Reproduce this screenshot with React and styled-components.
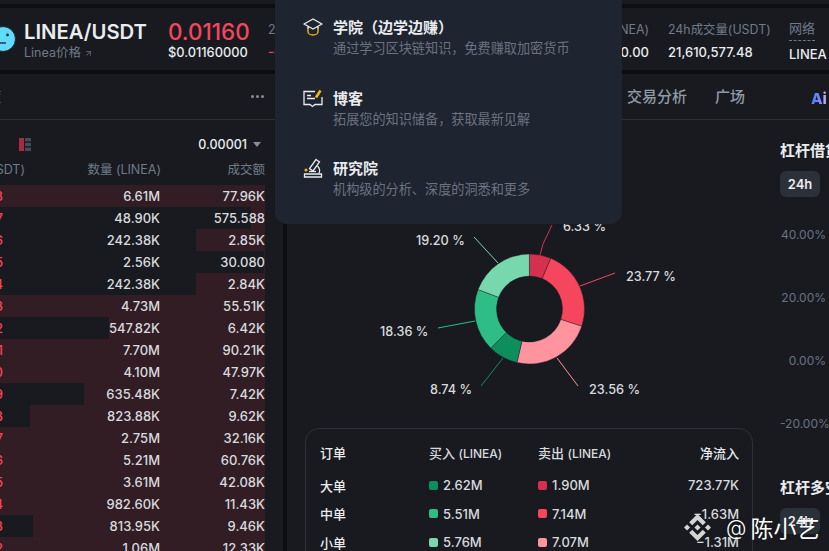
import React from 'react';
import styled, { createGlobalStyle } from 'styled-components';
import { ArrowUpRight } from 'lucide-react';

const FONT = `Inter, 'Noto Sans CJK SC', 'Noto Sans', sans-serif`;

const GlobalStyle = createGlobalStyle`
  html, body {
    margin: 0;
    padding: 0;
    background: #0c0e11;
    font-family: ${FONT};
  }
`;

const Page = styled.div`
  position: relative;
  width: 829px;
  height: 551px;
  overflow: hidden;
  background: #0c0e11;
  display: flex;
  flex-direction: column;
  gap: 4px;
  color: #eaecef;
`;

const TopStrip = styled.div`
  height: 4px;
  background: #181a20;
`;

const Header = styled.header`
  height: 62px;
  flex: none;
  background: #181a20;
  display: flex;
  align-items: center;
  gap: 19px;
  overflow: hidden;
`;

const Logo = styled.svg`
  width: 16px;
  height: 28px;
  flex: none;
  margin-right: -11px;
`;

const Pair = styled.div`
  width: 125px;
  flex: none;
  margin-top: 2px;
`;

const PairName = styled.div`
  font-size: 20.3px;
  line-height: 26px;
  font-weight: 600;
  white-space: nowrap;
  color: #eaecef;
`;

const PairLink = styled.div`
  display: flex;
  align-items: center;
  gap: 3px;
  font-size: 12.5px;
  line-height: 16px;
  color: #707a8a;
`;

const PriceBox = styled.div`
  width: 81px;
  flex: none;
  margin-top: 1px;
`;

const PriceMain = styled.div`
  font-size: 22.4px;
  line-height: 26px;
  font-weight: 500;
  color: #f6465d;
`;

const PriceFiat = styled.div`
  font-size: 12.8px;
  line-height: 16px;
  font-weight: 500;
  white-space: nowrap;
`;

const Stat = styled.div`
  width: ${(p) => p.$w}px;
  flex: none;
  margin-top: 4px;
  text-align: ${(p) => (p.$right ? 'right' : 'left')};
`;

const NetStat = styled(Stat)`
  margin-top: 0;
`;

const StatLabel = styled.div`
  font-size: 12.4px;
  line-height: 16px;
  margin-bottom: 6px;
  color: #707a8a;
  white-space: nowrap;
`;

const NetLabel = styled(StatLabel)`
  display: inline-block;
  font-size: 13px;
  line-height: 17px;
  margin-bottom: 5px;
  border-bottom: 1px dashed #707a8a;
  padding-bottom: 3px;
`;

const StatValue = styled.div`
  font-size: 13px;
  line-height: 16px;
  font-weight: 500;
  white-space: nowrap;
  color: ${(p) => p.$color || '#eaecef'};
`;

const Body = styled.div`
  flex: 1;
  min-height: 0;
  display: flex;
  gap: 4px;
`;

const BookPanel = styled.section`
  width: 283px;
  flex: none;
  background: #181a20;
  overflow: hidden;
`;

const MainPanel = styled.section`
  flex: 1;
  min-width: 0;
  background: #181a20;
  overflow: hidden;
`;

const BookTabs = styled.div`
  height: 45px;
  display: flex;
  align-items: center;
  justify-content: space-between;
  padding-right: 19px;
  border-bottom: 1px solid #2b2f36;
`;

const BookTabTitle = styled.div`
  margin-left: -14px;
  font-size: 15px;
  font-weight: 500;
  color: #929aa5;
`;

const Dots = styled.div`
  display: flex;
  gap: 2px;

  i {
    width: 3px;
    height: 3px;
    border-radius: 50%;
    background: #848e9c;
  }
`;

const Selector = styled.div`
  height: 20px;
  padding: 14px 22px 6px 19px;
  display: flex;
  align-items: center;
`;

const TickValue = styled.span`
  margin-left: auto;
  font-size: 12.5px;
  font-weight: 500;
`;

const Caret = styled.span`
  margin-left: 6px;
  width: 0;
  height: 0;
  border-left: 4px solid transparent;
  border-right: 4px solid transparent;
  border-top: 5px solid #848e9c;
`;

const BookHead = styled.div`
  width: 265px;
  height: 18px;
  margin-bottom: 7px;
  display: grid;
  grid-template-columns: 25px 136px 104px;
  font-size: 12.5px;
  line-height: 20px;
  color: #707a8a;
  text-align: right;
`;

const HeadPrice = styled.span`
  display: flex;
  justify-content: flex-end;
  white-space: nowrap;
`;

const BookRow = styled.div`
  position: relative;
  width: 265px;
  height: 22px;
  display: grid;
  grid-template-columns: 3px 157px 105px;
  align-items: center;
  font-size: 13px;
  font-weight: 500;
  color: #d8dade;
  text-align: right;
`;

const RowFill = styled.div`
  position: absolute;
  top: 0;
  bottom: 0;
  right: 0;
  background: #321d25;
`;

const RowCell = styled.span`
  position: relative;
  white-space: nowrap;
`;

const RowPrice = styled(RowCell)`
  display: flex;
  justify-content: flex-end;
  color: #f6465d;
`;

const MainTabs = styled.nav`
  height: 43px;
  padding: 0 0 2px 340px;
  display: flex;
  align-items: center;
  border-bottom: 1px solid #2b2f36;
  overflow: hidden;
`;

const Tab = styled.span`
  font-size: 15px;
  font-weight: 500;
  color: #929aa5;
  white-space: nowrap;
  margin-right: ${(p) => p.$gap}px;
`;

const AiTab = styled.span`
  margin-top: 6px;
  font-size: 15px;
  font-weight: 800;
  background: linear-gradient(90deg, #3f7fff, #7a86ff 55%, #cdbdff);
  -webkit-background-clip: text;
  background-clip: text;
  color: transparent;
`;

const MainBody = styled.div`
  display: flex;
  padding-left: 18px;
`;

const CenterCol = styled.div`
  width: 448px;
  flex: none;
`;

const ChartSvg = styled.svg`
  display: block;
  width: 448px;
  height: 308px;
`;

const ChartLabel = styled.text`
  font-family: ${FONT};
  font-size: 12.7px;
  font-weight: 500;
  fill: #d8dade;
`;

const OrderCard = styled.div`
  border: 1px solid #2b3139;
  border-radius: 14px;
  padding: 14px 13px 20px 14px;
`;

const OrderGrid = styled.div`
  display: grid;
  grid-template-columns: 109px 109px 1fr auto;
  align-items: center;
  font-size: 13px;
  font-weight: 500;
  height: ${(p) => (p.$head ? 18 : 28.5)}px;
  margin-bottom: ${(p) => (p.$head ? 10 : 0)}px;
  color: #d8dade;
`;

const OrderName = styled.span`
  color: #eaecef;
`;

const UnitText = styled.span`
  font-size: 12px;
`;

const Legend = styled.span`
  display: flex;
  align-items: center;
  gap: 5px;

  &::before {
    content: '';
    width: 9px;
    height: 9px;
    border-radius: 2px;
    background: ${(p) => p.$color};
  }
`;

const SideCol = styled.aside`
  margin-left: 27px;
  width: 46px;
  flex: none;
  padding-top: 20px;
`;

const SideTitle = styled.div`
  font-size: 15px;
  line-height: 22px;
  font-weight: 600;
  white-space: nowrap;
  color: #eaecef;
`;

const RangeButton = styled.div`
  width: 40px;
  height: 26px;
  margin-top: 9px;
  border-radius: 6px;
  background: #2b3139;
  display: flex;
  align-items: center;
  justify-content: center;
  font-size: 13px;
  font-weight: 600;
`;

const Axis = styled.div`
  margin-top: 28px;
`;

const AxisTick = styled.div`
  height: 63px;
  font-size: 12px;
  line-height: 20px;
  text-align: right;
  color: #6b7380;
  white-space: nowrap;
`;

const Menu = styled.div`
  position: absolute;
  top: 0;
  left: 275px;
  width: 347px;
  height: 224px;
  box-sizing: border-box;
  padding-top: 18px;
  background: #1e2430;
  border-radius: 0 0 12px 12px;
`;

const MenuItem = styled.div`
  height: 70.5px;
  padding-left: 28px;
  display: flex;
  gap: 10px;
`;

const MenuIcon = styled.svg`
  width: 20px;
  height: 20px;
  flex: none;
  margin-top: -1px;
`;

const MenuTitle = styled.div`
  font-size: 15px;
  line-height: 20px;
  font-weight: 600;
  color: #eaecef;
`;

const MenuDesc = styled.div`
  font-size: 13.15px;
  line-height: 20px;
  color: #6b7380;
`;

const Watermark = styled.div`
  position: absolute;
  left: 684px;
  top: 510px;
  display: flex;
  align-items: center;
  color: #fff;
  text-shadow: 0 0 2px rgba(0, 0, 0, 0.5);
`;

const WatermarkLogo = styled.svg`
  width: 27px;
  height: 27px;
  margin-right: 15px;
  fill: rgba(228, 228, 228, 0.92);
`;

const WatermarkAt = styled.span`
  font-size: 21px;
  font-weight: 300;
  margin-right: 4px;
`;

const WatermarkName = styled.span`
  font-size: 23px;
  font-weight: 400;
`;

const bookRows = [
  ['0.01183', '6.61M', '77.96K', 265],
  ['0.01177', '48.90K', '575.588', 14],
  ['0.01176', '242.38K', '2.85K', 69],
  ['0.01175', '2.56K', '30.080', 1],
  ['0.01174', '242.38K', '2.84K', 69],
  ['0.01173', '4.73M', '55.51K', 265],
  ['0.01172', '547.82K', '6.42K', 156],
  ['0.01171', '7.70M', '90.21K', 265],
  ['0.01170', '4.10M', '47.97K', 265],
  ['0.01169', '635.48K', '7.42K', 181],
  ['0.01168', '823.88K', '9.62K', 235],
  ['0.01167', '2.75M', '32.16K', 265],
  ['0.01166', '5.21M', '60.76K', 265],
  ['0.01165', '3.61M', '42.08K', 265],
  ['0.01164', '982.60K', '11.43K', 265],
  ['0.01163', '813.95K', '9.46K', 232],
  ['0.01162', '1.06M', '12.33K', 265],
];

const slices = [
  { value: 6.33, color: '#d6304f' },
  { value: 23.77, color: '#f6465d' },
  { value: 23.56, color: '#ff939e' },
  { value: 8.74, color: '#0e8e5d' },
  { value: 18.36, color: '#2ebd85' },
  { value: 19.2, color: '#78d8ad' },
];

const leaders = [
  { line: '540,255 543,244 552,225', color: '#d6304f', label: '6.33 %', x: 563, y: 231 },
  { line: '580,286 615,273', color: '#f6465d', label: '23.77 %', x: 626, y: 281 },
  { line: '557,358 578,386', color: '#ff939e', label: '23.56 %', x: 589, y: 394 },
  { line: '503,358 481,386', color: '#0e8e5d', label: '8.74 %', x: 430, y: 394 },
  { line: '475,321 438,328', color: '#2ebd85', label: '18.36 %', x: 380, y: 336 },
  { line: '498,263 474,237', color: '#78d8ad', label: '19.20 %', x: 416, y: 245 },
];

const orders = [
  ['大单', '2.62M', '#0e8e5d', '1.90M', '#d6304f', '723.77K'],
  ['中单', '5.51M', '#2ebd85', '7.14M', '#f6465d', '−1.63M'],
  ['小单', '5.76M', '#78d8ad', '7.07M', '#ff939e', '−1.31M'],
];

function slicePath(from, to) {
  const cx = 529.5;
  const cy = 309;
  const R = 55;
  const r = 33;
  const pt = (rad, pct) => {
    const a = (pct / 100) * Math.PI * 2;
    return `${(cx + rad * Math.sin(a)).toFixed(2)} ${(cy - rad * Math.cos(a)).toFixed(2)}`;
  };
  const large = to - from > 50 ? 1 : 0;
  return `M${pt(R, from)} A${R} ${R} 0 ${large} 1 ${pt(R, to)} L${pt(r, to)} A${r} ${r} 0 ${large} 0 ${pt(r, from)} Z`;
}

function Donut() {
  let acc = 0;
  return (
    <ChartSvg viewBox="305 120 448 308">
      {leaders.map((l) => (
        <React.Fragment key={l.label}>
          <polyline points={l.line} fill="none" stroke={l.color} strokeWidth="1" />
          <ChartLabel x={l.x} y={l.y}>
            {l.label}
          </ChartLabel>
        </React.Fragment>
      ))}
      {slices.map((s) => {
        const d = slicePath(acc, acc + s.value);
        acc += s.value;
        return <path key={s.color} d={d} fill={s.color} stroke="#181a20" strokeWidth="0.4" />;
      })}
    </ChartSvg>
  );
}

function CoinLogo() {
  return (
    <Logo viewBox="0 0 16 28">
      <circle cx="3" cy="14" r="12.5" fill="#61dafb" stroke="#20232a" strokeWidth="1" />
      <circle cx="7.5" cy="10" r="1.4" fill="#1d2a3a" />
      <path d="M0 18h6" stroke="#1d2a3a" strokeWidth="1.4" />
    </Logo>
  );
}

function BookIcon() {
  return (
    <svg width="13" height="13" viewBox="0 0 13 13">
      <rect x="0" y="0" width="5" height="13" fill="#a82a42" />
      <rect x="6" y="0" width="6" height="3.4" fill="#474d57" />
      <rect x="6" y="4.8" width="6" height="3.4" fill="#474d57" />
      <rect x="6" y="9.6" width="6" height="3.4" fill="#474d57" />
    </svg>
  );
}

function CapIcon() {
  return (
    <MenuIcon viewBox="0 0 20 20" fill="none">
      <path d="M5 10.5v4.2c0 1.8 2.2 3.3 5 3.3s5-1.5 5-3.3v-4.2" stroke="#f0b90b" strokeWidth="1.4" />
      <path d="M10 2 19 7l-9 5-9-5z" stroke="#eaecef" strokeWidth="1.4" strokeLinejoin="round" />
      <path d="M5 9.5v2M15 9.5v2" stroke="#eaecef" strokeWidth="1.4" />
    </MenuIcon>
  );
}

function BlogIcon() {
  return (
    <MenuIcon viewBox="0 0 20 20" fill="none">
      <path d="M12 3.5H1v13h6l2.5 2 2.5-2h7V9" stroke="#eaecef" strokeWidth="1.3" />
      <path d="M4 7.5h4M4 10.5h8" stroke="#eaecef" strokeWidth="1.3" />
      <path d="M13 9.5 17.5 2.5" stroke="#f0b90b" strokeWidth="2.6" />
    </MenuIcon>
  );
}

function ScopeIcon() {
  return (
    <MenuIcon viewBox="0 0 20 20" fill="none">
      <path d="M13 1.5 16.5 4 10 13 6.5 10.5z" stroke="#eaecef" strokeWidth="1.3" />
      <path d="M14.5 8c2.2 2.2 2.6 5 1.5 7.5" stroke="#eaecef" strokeWidth="1.3" />
      <path d="M1.5 16h17v3h-17z" stroke="#eaecef" strokeWidth="1.3" />
      <path d="M6 13.5h7" stroke="#eaecef" strokeWidth="1.3" />
      <circle cx="3" cy="12" r="1.6" fill="#f0b90b" />
    </MenuIcon>
  );
}

function App() {
  return (
    <Page>
      <GlobalStyle />
      <TopStrip />

      <Header>
        <CoinLogo />
        <Pair>
          <PairName>LINEA/USDT</PairName>
          <PairLink>
            Linea价格 <ArrowUpRight size={9} />
          </PairLink>
        </Pair>
        <PriceBox>
          <PriceMain>0.01160</PriceMain>
          <PriceFiat>$0.01160000</PriceFiat>
        </PriceBox>
        <Stat $w={257}>
          <StatLabel>24h涨跌</StatLabel>
          <StatValue $color="#f6465d">-0.00040</StatValue>
        </Stat>
        <Stat $w={105} $right>
          <StatLabel>24h成交量(LINEA)</StatLabel>
          <StatValue>1,825,317,240.00</StatValue>
        </Stat>
        <Stat $w={102}>
          <StatLabel>24h成交量(USDT)</StatLabel>
          <StatValue>21,610,577.48</StatValue>
        </Stat>
        <NetStat $w={60}>
          <NetLabel>网络</NetLabel>
          <StatValue>LINEA (LINEA)</StatValue>
        </NetStat>
      </Header>

      <Body>
        <BookPanel>
          <BookTabs>
            <BookTabTitle>簿</BookTabTitle>
            <Dots>
              <i />
              <i />
              <i />
            </Dots>
          </BookTabs>
          <Selector>
            <BookIcon />
            <TickValue>0.00001</TickValue>
            <Caret />
          </Selector>
          <BookHead>
            <HeadPrice>价格(USDT)</HeadPrice>
            <span>数量 (LINEA)</span>
            <span>成交额</span>
          </BookHead>
          {bookRows.map(([price, amount, total, fill]) => (
            <BookRow key={price}>
              <RowFill style={{ width: fill }} />
              <RowPrice>{price}</RowPrice>
              <RowCell>{amount}</RowCell>
              <RowCell>{total}</RowCell>
            </BookRow>
          ))}
        </BookPanel>

        <MainPanel>
          <MainTabs>
            <Tab $gap={28}>交易分析</Tab>
            <Tab $gap={66}>广场</Tab>
            <AiTab>Ai</AiTab>
          </MainTabs>
          <MainBody>
            <CenterCol>
              <Donut />
              <OrderCard>
                <OrderGrid $head>
                  <OrderName>订单</OrderName>
                  <span>
                    买入 <UnitText>(LINEA)</UnitText>
                  </span>
                  <span>
                    卖出 <UnitText>(LINEA)</UnitText>
                  </span>
                  <OrderName>净流入</OrderName>
                </OrderGrid>
                {orders.map(([name, buy, buyColor, sell, sellColor, net]) => (
                  <OrderGrid key={name}>
                    <OrderName>{name}</OrderName>
                    <Legend $color={buyColor}>{buy}</Legend>
                    <Legend $color={sellColor}>{sell}</Legend>
                    <span>{net}</span>
                  </OrderGrid>
                ))}
              </OrderCard>
            </CenterCol>
            <SideCol>
              <SideTitle>杠杆借贷增长</SideTitle>
              <RangeButton>24h</RangeButton>
              <Axis>
                <AxisTick>40.00%</AxisTick>
                <AxisTick>20.00%</AxisTick>
                <AxisTick>0.00%</AxisTick>
                <AxisTick>-20.00%</AxisTick>
              </Axis>
              <SideTitle>杠杆多空比</SideTitle>
              <RangeButton>24h</RangeButton>
            </SideCol>
          </MainBody>
        </MainPanel>
      </Body>

      <Menu>
        <MenuItem>
          <CapIcon />
          <div>
            <MenuTitle>学院（边学边赚）</MenuTitle>
            <MenuDesc>通过学习区块链知识，免费赚取加密货币</MenuDesc>
          </div>
        </MenuItem>
        <MenuItem>
          <BlogIcon />
          <div>
            <MenuTitle>博客</MenuTitle>
            <MenuDesc>拓展您的知识储备，获取最新见解</MenuDesc>
          </div>
        </MenuItem>
        <MenuItem>
          <ScopeIcon />
          <div>
            <MenuTitle>研究院</MenuTitle>
            <MenuDesc>机构级的分析、深度的洞悉和更多</MenuDesc>
          </div>
        </MenuItem>
      </Menu>

      <Watermark>
        <WatermarkLogo viewBox="0 0 126.61 126.61">
          <path d="M38.73 53.2l24.59-24.58 24.6 24.6 14.3-14.31L63.32 0 24.42 38.9zM0 63.31l14.3-14.31 14.31 14.31-14.31 14.3zM38.73 73.41l24.59 24.59 24.6-24.6 14.31 14.29-38.9 38.91-38.91-38.88-.02-.02zM98.28 63.31l14.3-14.31 14.31 14.3-14.31 14.32zM77.83 63.3L63.32 48.78 52.59 59.51l-1.24 1.23-2.54 2.54 14.51 14.5 14.51-14.47z" />
        </WatermarkLogo>
        <WatermarkAt>@</WatermarkAt>
        <WatermarkName>陈小艺</WatermarkName>
      </Watermark>
    </Page>
  );
}

export default App;
